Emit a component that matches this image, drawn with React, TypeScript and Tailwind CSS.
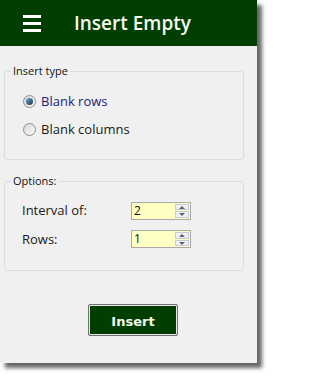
import React from "react";

const ui = { fontFamily: '"Open Sans", "Noto Sans", sans-serif' };

function Radio({ checked }: { checked?: boolean }) {
  return (
    <span className="flex h-[13px] w-[13px] items-center justify-center rounded-full border border-[#8f8f8f] bg-gradient-to-br from-[#d6d6d6] to-[#fbfbfb]">
      {checked && (
        <span className="h-[7px] w-[7px] rounded-full bg-gradient-to-br from-[#6fa3c4] to-[#153a57]" />
      )}
    </span>
  );
}

function Spin({ value }: { value: string }) {
  return (
    <div className="flex h-[18px] w-[60px] border border-[#a9a9a9] bg-[#ffffc4]">
      <span className="flex-1 pl-[2px] text-[12px] leading-[16px] text-[#111]">{value}</span>
      <div className="my-[1px] mr-[1px] flex w-[14px] flex-col gap-[1px]">
        <div className="flex flex-1 items-center justify-center border border-[#c7cbd4] bg-[#eef0f4]">
          <span className="h-0 w-0 border-x-[3px] border-b-[3px] border-x-transparent border-b-[#5c6270]" />
        </div>
        <div className="flex flex-1 items-center justify-center border border-[#c7cbd4] bg-[#eef0f4]">
          <span className="h-0 w-0 border-x-[3px] border-t-[3px] border-x-transparent border-t-[#5c6270]" />
        </div>
      </div>
    </div>
  );
}

export default function App() {
  return (
    <div className="h-[378px] w-[272px] bg-white" style={ui}>
      <div className="h-[363px] w-[257px] bg-[#f0f0f0] shadow-[5px_5px_4px_rgba(0,0,0,0.6)]">
        {/* Header */}
        <div className="flex h-[46px] items-center bg-[#003f00]">
          <div className="ml-[23px] flex w-[18px] flex-col gap-[4px]">
            <span className="h-[3px] bg-white" />
            <span className="h-[3px] bg-white" />
            <span className="h-[3px] bg-white" />
          </div>
          <h1 className="ml-[33px] text-[19px] font-semibold leading-none text-[#f4f8ee]">Insert Empty</h1>
        </div>

        <div className="px-[4px] pt-[25px]">
          {/* Insert type */}
          <div className="relative h-[89px] w-[240px] rounded-[3px] border border-[#d8dde1]">
            <span className="absolute -top-[9px] left-[6px] bg-[#f0f0f0] px-[2px] text-[11px] leading-[16px] text-[#111]">
              Insert type
            </span>
            <div className="flex flex-col gap-[12px] pl-[18px] pt-[21px]">
              <label className="flex items-center gap-[5px] text-[13px] leading-[16px] text-[#1c1c7a]">
                <Radio checked />
                Blank rows
              </label>
              <label className="flex items-center gap-[5px] text-[13px] leading-[16px] text-[#1a1a1a]">
                <Radio />
                Blank columns
              </label>
            </div>
          </div>

          {/* Options */}
          <div className="relative mt-[21px] h-[90px] w-[240px] rounded-[3px] border border-[#d8dde1]">
            <span className="absolute -top-[9px] left-[6px] bg-[#f0f0f0] px-[2px] text-[11px] leading-[16px] text-[#111]">
              Options:
            </span>
            <div className="flex flex-col gap-[9px] pl-[17px] pt-[19px]">
              <div className="flex items-center">
                <span className="w-[109px] text-[13px] text-[#1a1a1a]">Interval of:</span>
                <Spin value="2" />
              </div>
              <div className="flex items-center">
                <span className="w-[109px] text-[13px] text-[#1a1a1a]">Rows:</span>
                <Spin value="1" />
              </div>
            </div>
          </div>
        </div>

        {/* Insert button */}
        <div className="mt-[33px] pl-[88px]">
          <button className="h-[32px] w-[90px] rounded-[2px] border border-[#707070] bg-[#003f00] p-0 shadow-[inset_0_0_0_1px_#e8e8e8,inset_0_0_0_2px_#003f00]">
            <span
              className="text-[13px] font-bold text-[#f4f8ee]"
              style={{ fontFamily: '"DejaVu Sans", Verdana, sans-serif' }}
            >
              Insert
            </span>
          </button>
        </div>
      </div>
    </div>
  );
}
